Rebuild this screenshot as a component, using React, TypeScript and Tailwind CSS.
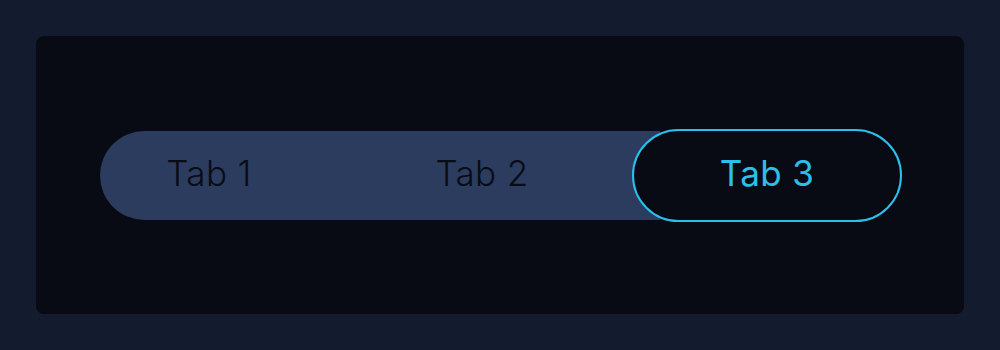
export default function App() {
  return (
    <div className="flex h-[350px] w-[1000px] bg-[#131b2e] p-[36px] font-['Inter',sans-serif]">
      <div className="flex flex-1 items-center rounded-[8px] bg-[#080b14] pl-[64px]">
        <div className="flex items-center">
          <div className="flex h-[89px] w-[560px] items-center rounded-l-full bg-[#2c3c5f] pb-[4px] pr-[14px] text-[35px] font-light tracking-[0.01em] text-[#080c16]">
            <div className="w-[218px] text-center">Tab 1</div>
            <div className="w-[328px] text-center">Tab 2</div>
          </div>
          <div className="-ml-[28px] flex h-[93px] w-[270px] items-center justify-center rounded-full border-2 border-[#2bc0ec] bg-[#080b14] pb-[4px] text-[35px] tracking-[0.01em] text-[#2bc0ec]">
            Tab 3
          </div>
        </div>
      </div>
    </div>
  );
}
